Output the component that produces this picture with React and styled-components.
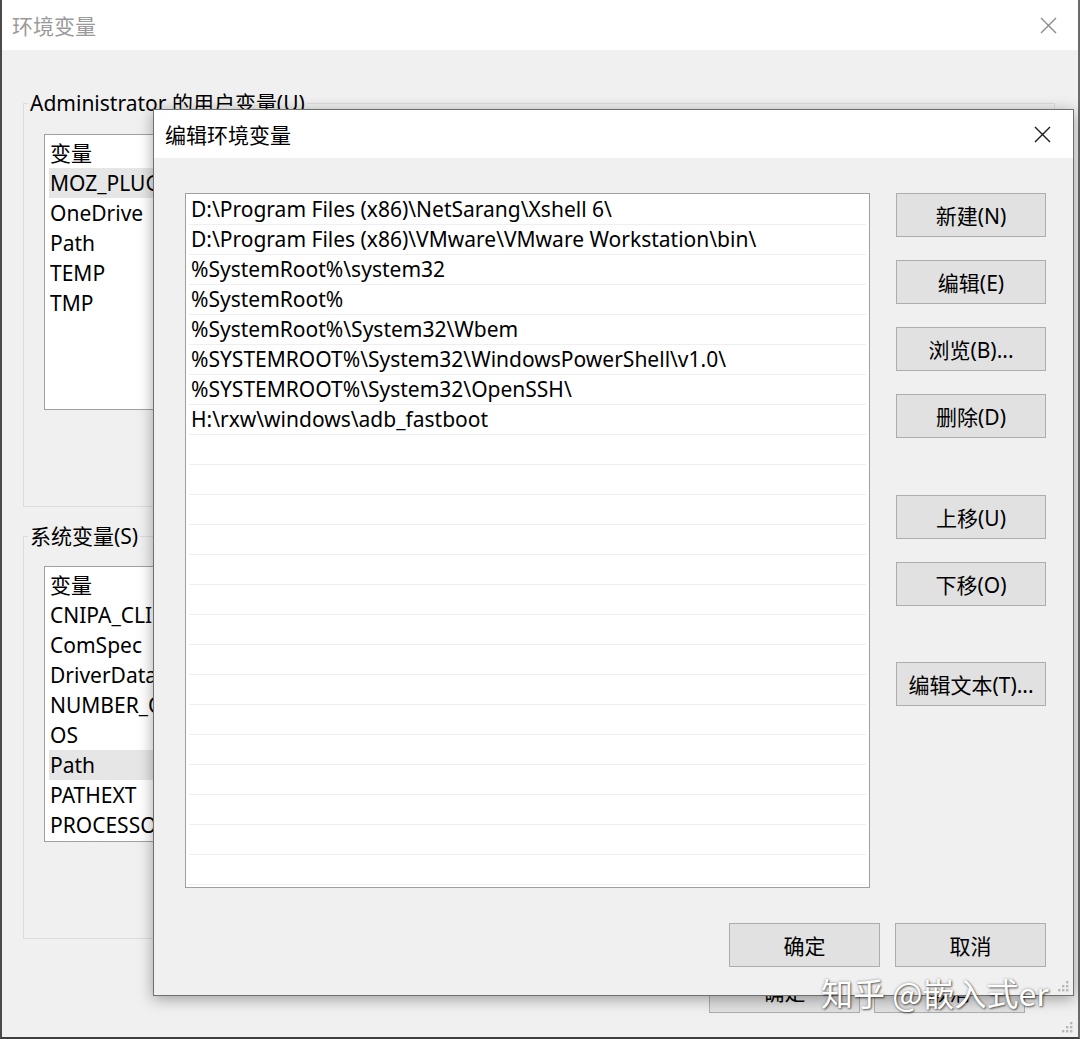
import React from "react";
import styled, { createGlobalStyle } from "styled-components";

const FONT = `"Noto Sans", "Noto Sans CJK SC", sans-serif`;

const GlobalStyle = createGlobalStyle`
  html, body { margin: 0; padding: 0; }
  body {
    width: 1080px;
    height: 1039px;
    overflow: hidden;
    background: #3a3a3a;
    font-family: ${FONT};
    color: #000;
  }
  * { box-sizing: border-box; }
`;

const Desktop = styled.div`
  position: relative;
  width: 1080px;
  height: 1039px;
  overflow: hidden;
`;

const Window = styled.div`
  width: 1080px;
  height: 1039px;
  background: #f0f0f0;
  border-left: 2px solid #4a4a4a;
  border-right: 2px solid #6a6a6a;
  border-bottom: 2px solid #3f3f3f;
  display: flex;
  flex-direction: column;
`;

const TitleBar = styled.div`
  height: ${(p) => p.$h}px;
  flex: none;
  background: #fff;
  display: flex;
  align-items: center;
  justify-content: space-between;
  padding-left: ${(p) => p.$pl}px;
  padding-right: ${(p) => p.$pr}px;
`;

const TitleText = styled.div`
  font-size: 21px;
  color: ${(p) => (p.$inactive ? "#9a9a9a" : "#000")};
`;

const WindowBody = styled.div`
  padding: 53px 23px 0 21px;
  display: flex;
  flex-direction: column;
`;

const GroupBox = styled.section`
  border: 1px solid #dcdcdc;
  height: ${(p) => p.$h}px;
  margin-top: ${(p) => p.$mt || 0}px;
  padding: 0 20px;
`;

const Legend = styled.div`
  margin-top: -15px;
  margin-left: -16px;
  width: fit-content;
  padding: 0 2px;
  background: #f0f0f0;
  font-size: 21px;
  line-height: 28px;
  height: 28px;
`;

const VarList = styled.div`
  margin-top: ${(p) => p.$mt}px;
  height: 276px;
  background: #fff;
  border: 1px solid #a0a0a0;
  padding-top: 3px;
  overflow: hidden;
`;

const VarRow = styled.div`
  height: 30px;
  line-height: 30px;
  margin-left: 4px;
  padding-left: 1px;
  font-size: 21px;
  white-space: nowrap;
  background: ${(p) => (p.$selected ? "#e6e6e6" : "transparent")};
`;

const WinButtons = styled.div`
  margin-top: 30px;
  margin-right: 30px;
  display: flex;
  justify-content: flex-end;
  gap: 14px;
`;

const Button = styled.button`
  width: ${(p) => p.$w || 150}px;
  height: 44px;
  flex: none;
  margin-top: ${(p) => p.$mt || 0}px;
  background: #e1e1e1;
  border: 1px solid #adadad;
  border-radius: 0;
  font-family: ${FONT};
  font-size: 21px;
  color: #000;
  padding: 0;
  display: flex;
  align-items: center;
  justify-content: center;
`;

const Dialog = styled.div`
  position: absolute;
  left: 153px;
  top: 109px;
  width: 921px;
  height: 887px;
  background: #f0f0f0;
  border: 1px solid #6f6f6f;
  box-shadow: 0 3px 14px rgba(0, 0, 0, 0.35);
  display: flex;
  flex-direction: column;
`;

const DialogBody = styled.div`
  padding: 35px 27px 0 31px;
  display: flex;
  flex-direction: column;
`;

const DialogMain = styled.div`
  display: flex;
  gap: 26px;
`;

const PathList = styled.div`
  width: 685px;
  height: 695px;
  background: #fff;
  border: 1px solid #a0a0a0;
  padding-top: 1px;
  overflow: hidden;
`;

const PathRow = styled.div`
  height: 30px;
  line-height: 29px;
  margin: 0 3px;
  padding-left: 2px;
  border-bottom: 1px solid #efefef;
  font-size: 21px;
  white-space: nowrap;
`;

const ButtonColumn = styled.div`
  display: flex;
  flex-direction: column;
  gap: 23px;
`;

const Footer = styled.div`
  margin-top: 35px;
  display: flex;
  justify-content: flex-end;
  gap: 15px;
`;

const Watermark = styled.div`
  position: absolute;
  left: 821px;
  top: 971px;
  font-family: "Noto Sans CJK SC", "Noto Sans", sans-serif;
  font-size: 32px;
  line-height: 42px;
  color: #fff;
  white-space: nowrap;
  text-shadow: 1px 1px 2px rgba(0, 0, 0, 0.55), 0 0 3px rgba(0, 0, 0, 0.35);
`;

const Grip = styled.svg`
  position: absolute;
  left: ${(p) => p.$x}px;
  top: ${(p) => p.$y}px;
`;

function CloseIcon({ color }) {
  return (
    <svg width="17" height="17" viewBox="0 0 17 17">
      <path d="M1 1 L16 16 M16 1 L1 16" stroke={color} strokeWidth="1.4" fill="none" />
    </svg>
  );
}

function GripIcon({ x, y }) {
  const dots = [
    [8, 0],
    [4, 4],
    [8, 4],
    [0, 8],
    [4, 8],
    [8, 8],
  ];
  return (
    <Grip $x={x} $y={y} width="11" height="11" viewBox="0 0 11 11">
      {dots.map(([dx, dy], i) => (
        <rect key={i} x={dx} y={dy} width="2.4" height="2.4" fill="#b8b8b8" />
      ))}
    </Grip>
  );
}

const userVars = ["变量", "MOZ_PLUGIN_PATH", "OneDrive", "Path", "TEMP", "TMP"];
const sysVars = [
  "变量",
  "CNIPA_CLIENT",
  "ComSpec",
  "DriverData",
  "NUMBER_OF_PROCESSORS",
  "OS",
  "Path",
  "PATHEXT",
  "PROCESSOR_ARCHITECTURE",
];

const paths = [
  "D:\\Program Files (x86)\\NetSarang\\Xshell 6\\",
  "D:\\Program Files (x86)\\VMware\\VMware Workstation\\bin\\",
  "%SystemRoot%\\system32",
  "%SystemRoot%",
  "%SystemRoot%\\System32\\Wbem",
  "%SYSTEMROOT%\\System32\\WindowsPowerShell\\v1.0\\",
  "%SYSTEMROOT%\\System32\\OpenSSH\\",
  "H:\\rxw\\windows\\adb_fastboot",
];

const rows = [...paths, ...Array(15).fill("")];

const sideButtons = [
  { label: "新建(N)", mt: 0 },
  { label: "编辑(E)", mt: 0 },
  { label: "浏览(B)...", mt: 0 },
  { label: "删除(D)", mt: 0 },
  { label: "上移(U)", mt: 34 },
  { label: "下移(O)", mt: 0 },
  { label: "编辑文本(T)...", mt: 33 },
];

export default function App() {
  return (
    <Desktop>
      <GlobalStyle />
      <Window>
        <TitleBar $h={50} $pl={10} $pr={21}>
          <TitleText $inactive>环境变量</TitleText>
          <CloseIcon color="#8a8a8a" />
        </TitleBar>
        <WindowBody>
          <GroupBox $h={404}>
            <Legend>Administrator 的用户变量(U)</Legend>
            <VarList $mt={17}>
              {userVars.map((v, i) => (
                <VarRow key={i} $selected={i === 1}>
                  {v}
                </VarRow>
              ))}
            </VarList>
          </GroupBox>
          <GroupBox $h={403} $mt={29}>
            <Legend>系统变量(S)</Legend>
            <VarList $mt={16}>
              {sysVars.map((v, i) => (
                <VarRow key={i} $selected={i === 6}>
                  {v}
                </VarRow>
              ))}
            </VarList>
          </GroupBox>
          <WinButtons>
            <Button $w={151}>确定</Button>
            <Button $w={151}>取消</Button>
          </WinButtons>
        </WindowBody>
      </Window>

      <Dialog>
        <TitleBar $h={48} $pl={11} $pr={22}>
          <TitleText>编辑环境变量</TitleText>
          <CloseIcon color="#1a1a1a" />
        </TitleBar>
        <DialogBody>
          <DialogMain>
            <PathList>
              {rows.map((r, i) => (
                <PathRow key={i}>{r}</PathRow>
              ))}
            </PathList>
            <ButtonColumn>
              {sideButtons.map((b) => (
                <Button key={b.label} $mt={b.mt}>
                  {b.label}
                </Button>
              ))}
            </ButtonColumn>
          </DialogMain>
          <Footer>
            <Button $w={151}>确定</Button>
            <Button $w={151}>取消</Button>
          </Footer>
        </DialogBody>
      </Dialog>

      <GripIcon x={1058} y={981} />
      <GripIcon x={1062} y={1022} />
      <Watermark>知乎 @嵌入式er</Watermark>
    </Desktop>
  );
}
